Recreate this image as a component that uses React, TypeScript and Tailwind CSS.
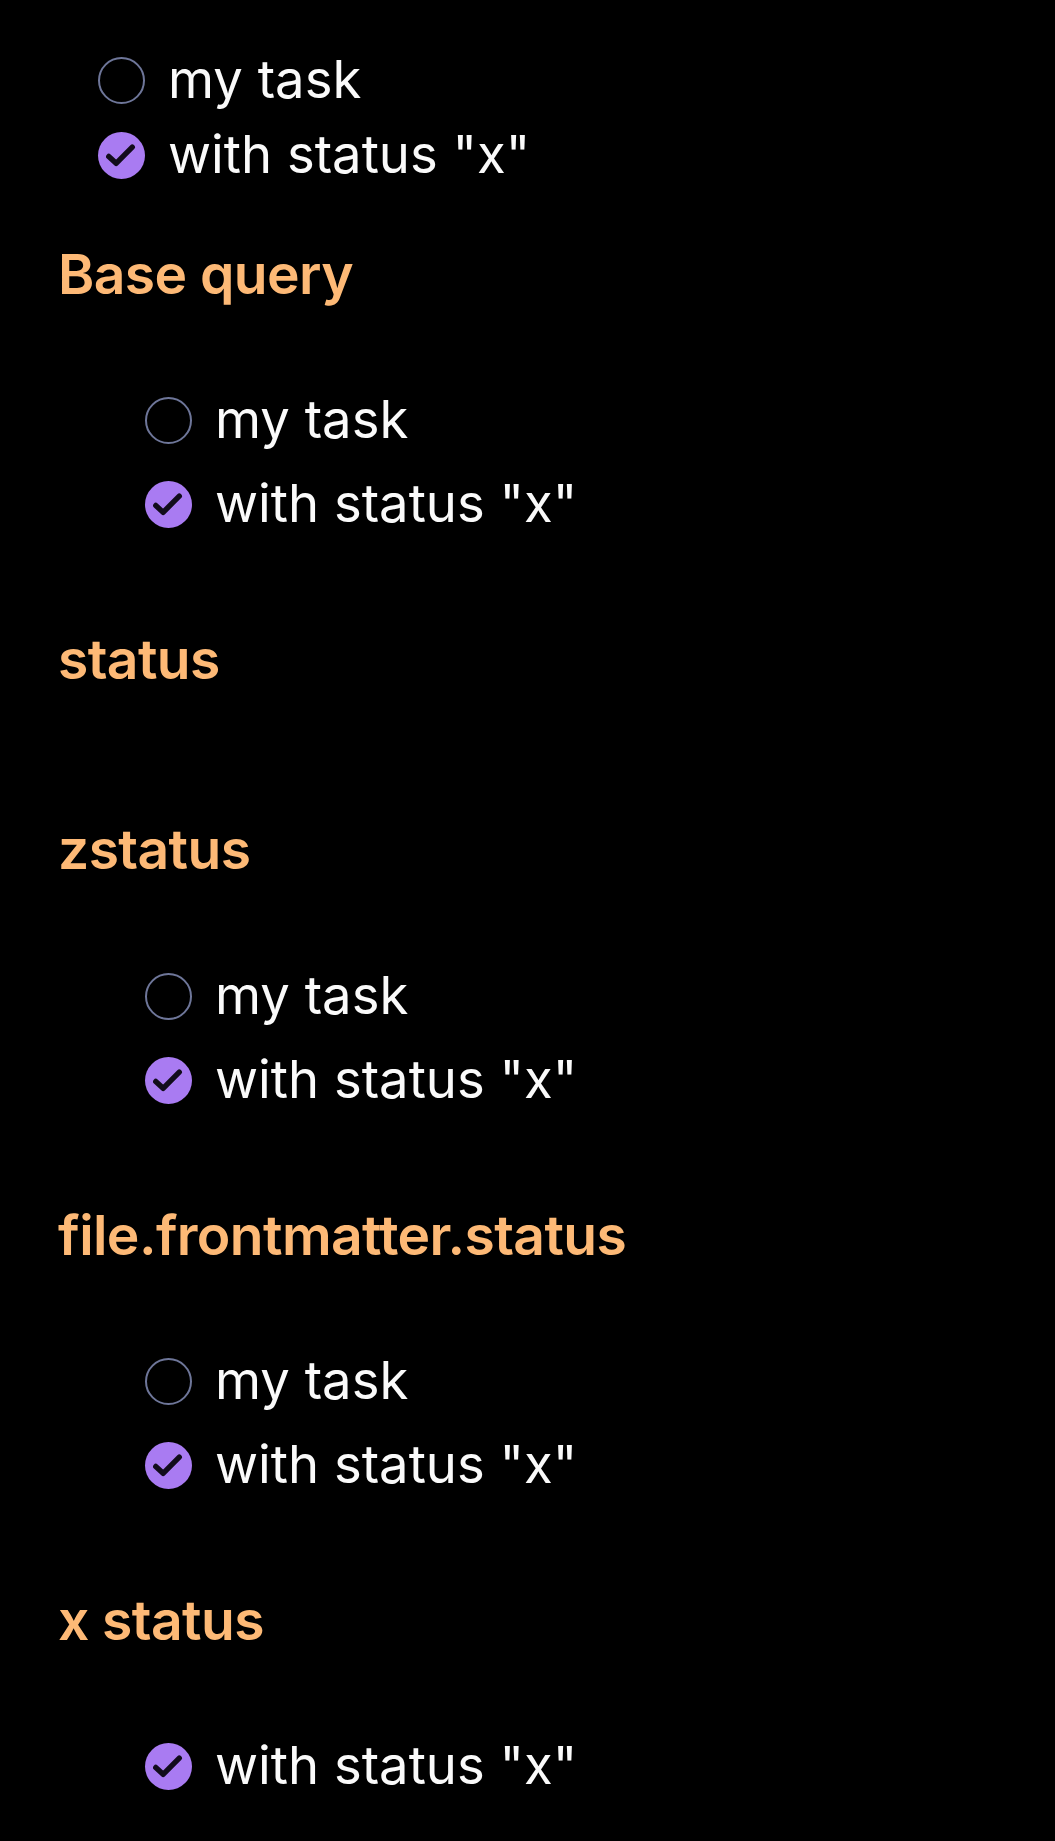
import { Fragment } from "react";

// Task list rendering: open and done rows share one layout
function Circle({ done }: { done: boolean }) {
  if (!done) {
    return <span className="block h-[47px] w-[47px] shrink-0 rounded-full border-2 border-[#6e7699]" />;
  }
  return (
    <span className="flex h-[47px] w-[47px] shrink-0 items-center justify-center rounded-full bg-[#a97bf2]">
      <svg viewBox="0 0 48 48" className="h-[47px] w-[47px]" fill="none" aria-hidden="true">
        <path d="M11 25l7.5 7L35 15.5" stroke="#120c1c" strokeWidth="5.5" strokeLinecap="round" strokeLinejoin="round" />
      </svg>
    </span>
  );
}

function Task({ text, done, height }: { text: string; done: boolean; height: string }) {
  return (
    <li className={`flex items-center gap-[23px] ${height}`}>
      <Circle done={done} />
      <span className="-mt-[2px]">{text}</span>
    </li>
  );
}

function Heading({ text, className }: { text: string; className: string }) {
  return <h2 className={`-ml-px text-[55.2px] leading-[68px] font-semibold tracking-[-0.6px] text-[#fdb976] ${className}`}>{text}</h2>;
}

const OPEN = "my task";
const DONE = 'with status "x"';

export default function App() {
  return (
    <div className="h-[1841px] w-[1055px] overflow-hidden bg-black pl-[59px] pt-[43px] text-[52.6px] text-[#fafafa] [font-family:Inter,sans-serif]">
      <ul className="pl-[39px]">
        <Task text={OPEN} done={false} height="h-[75px]" />
        <Task text={DONE} done height="h-[75px]" />
      </ul>
      <Heading text="Base query" className="mt-[47px]" />
      {[{ next: "status" }].map((g) => (
        <Fragment key={g.next}>
          <ul className="mt-[70px] pl-[86px]">
            <Task text={OPEN} done={false} height="h-[84px]" />
            <Task text={DONE} done height="h-[84px]" />
          </ul>
          <Heading text={g.next} className="mt-[79px]" />
        </Fragment>
      ))}
      <Heading text="zstatus" className="mt-[122px]" />
      <ul className="mt-[71px] pl-[86px]">
        <Task text={OPEN} done={false} height="h-[84px]" />
        <Task text={DONE} done height="h-[84px]" />
      </ul>
      <Heading text="file.frontmatter.status" className="mt-[79px]" />
      <ul className="mt-[70px] pl-[86px]">
        <Task text={OPEN} done={false} height="h-[84px]" />
        <Task text={DONE} done height="h-[84px]" />
      </ul>
      <Heading text="x status" className="mt-[79px]" />
      <ul className="mt-[70px] pl-[86px]">
        <Task text={DONE} done height="h-[84px]" />
      </ul>
    </div>
  );
}
